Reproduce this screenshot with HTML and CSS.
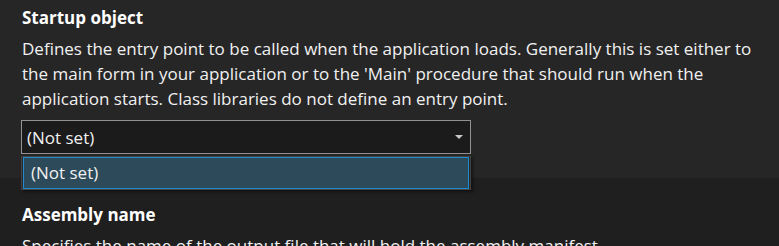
FILE: index.html
```html
<!DOCTYPE html>
<html>
<head>
<meta charset="utf-8">
<link rel="stylesheet" href="styles.css">
</head>
<body>
<div class="page">
  <section class="group group-top">
    <h2 class="title">Startup object</h2>
    <p class="desc">Defines the entry point to be called when the application loads. Generally this is set either to the main form in your application or to the 'Main' procedure that should run when the application starts. Class libraries do not define an entry point.</p>
    <div class="combo">
      <div class="select">
        <span class="value">(Not set)</span>
        <svg class="arrow" width="8" height="4" viewBox="0 0 8 4"><path d="M0 0H8L4 4Z" fill="#c8c8c8"/></svg>
      </div>
      <div class="popup">
        <div class="option selected">(Not set)</div>
      </div>
    </div>
  </section>
  <section class="group group-bottom">
    <h2 class="title">Assembly name</h2>
    <p class="desc">Specifies the name of the output file that will hold the assembly manifest.</p>
  </section>
</div>
</body>
</html>
```
FILE: styles.css
```css
html, body {
  margin: 0;
  padding: 0;
  background: #1f1f1f;
}
.page {
  width: 779px;
  height: 246px;
  overflow: hidden;
  font-family: "Open Sans", "Noto Sans", sans-serif;
  color: #f1f1f1;
}
.group {
  padding-left: 22px;
  padding-right: 10px;
}
.group-top {
  background: #262626;
  height: 178px;
  box-sizing: border-box;
  padding-top: 5px;
}
.group-bottom {
  background: #1f1f1f;
  padding-top: 24px;
}
.title {
  margin: 0;
  font-size: 17px;
  font-weight: 700;
  line-height: 26px;
  color: #ffffff;
}
.desc {
  margin: 5px 0 0 0;
  font-size: 17px;
  line-height: 25px;
  width: 740px;
}
.group-bottom .desc {
  white-space: nowrap;
}
.combo {
  position: relative;
  width: 450px;
  margin-top: 9px;
  margin-left: -1px;
}
.select {
  height: 34px;
  box-sizing: border-box;
  border: 1px solid #919191;
  background: #1b1b1b;
  display: flex;
  align-items: center;
  justify-content: space-between;
  padding: 0 6px 0 5px;
}
.value {
  font-size: 17px;
  color: #f1f1f1;
}
.arrow {
  margin-right: 1px;
}
.popup {
  position: absolute;
  top: 36px;
  left: 0;
  width: 450px;
  height: 34px;
  box-sizing: border-box;
  border: 1px solid #434343;
  background: #2a2a2a;
  padding: 0 1px;
  box-shadow: 2px 2px 3px rgba(0,0,0,0.45);
  z-index: 2;
}
.option {
  height: 32px;
  box-sizing: border-box;
  border: 1px solid #1f8ad0;
  background: #2c4a59;
  font-size: 17px;
  line-height: 29px;
  padding-left: 7px;
  color: #f1f1f1;
}
```
